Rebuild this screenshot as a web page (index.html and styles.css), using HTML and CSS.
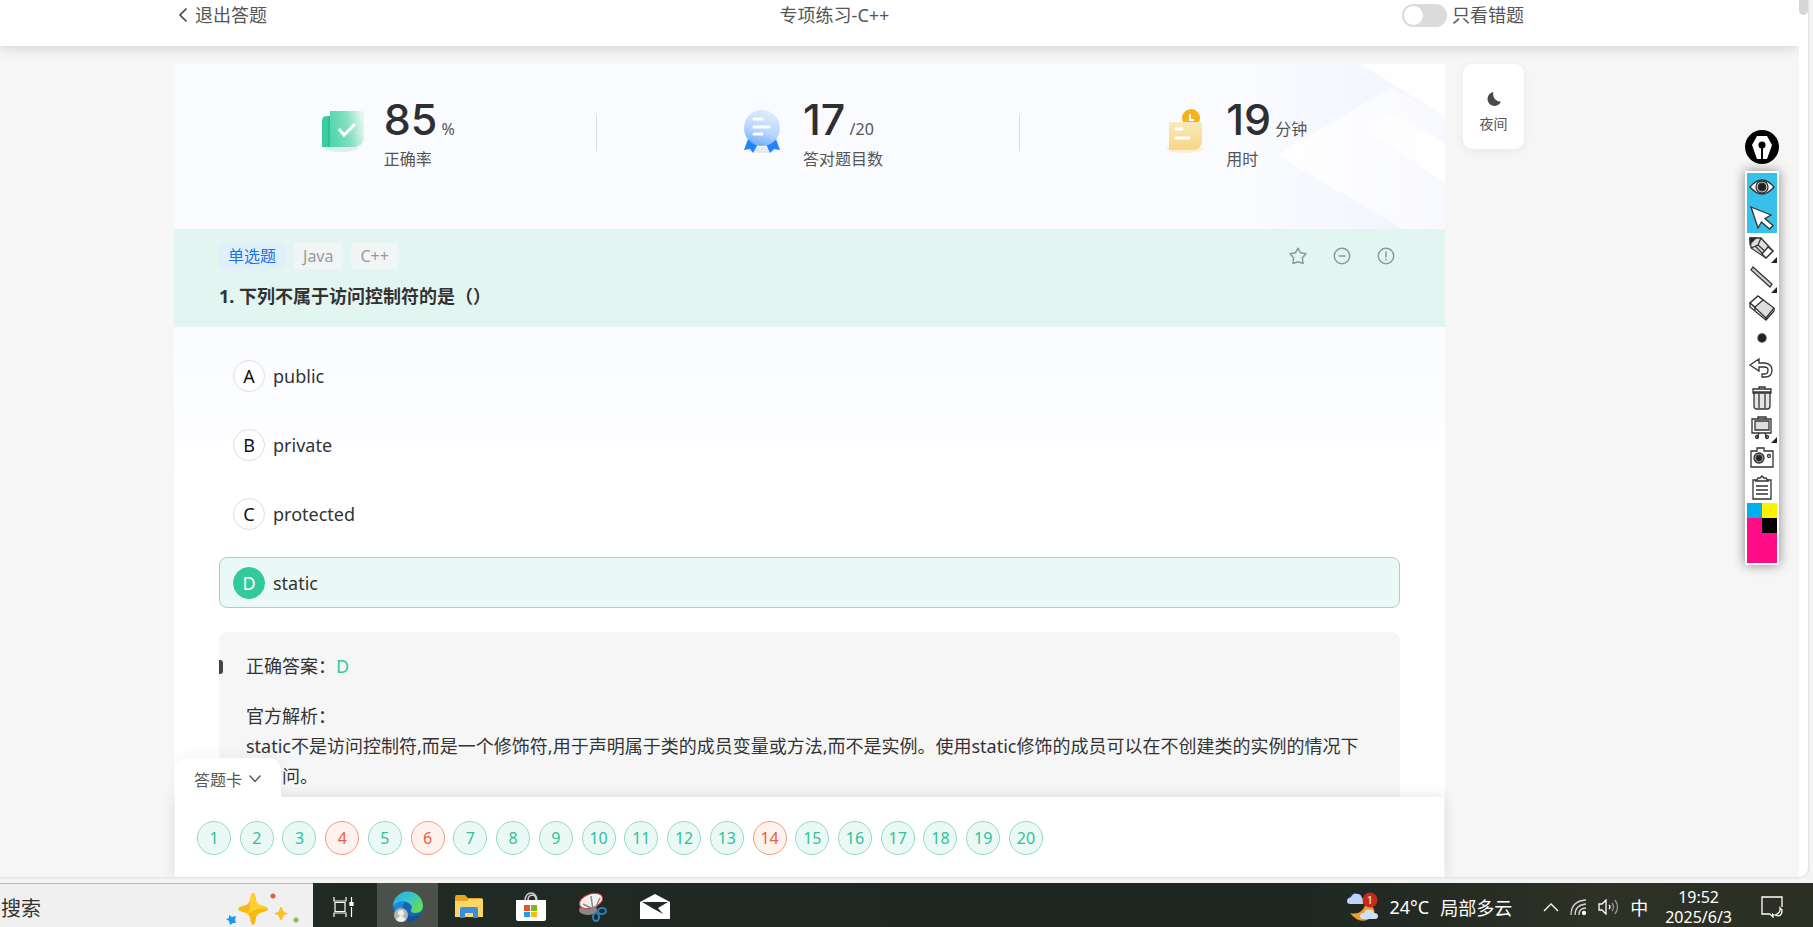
FILE: index.html
```
<!DOCTYPE html>
<html lang="zh-CN">

<head>
    <meta charset="UTF-8">
    <title>专项练习-C++</title>
    <link rel="stylesheet" href="styles.css">
</head>
<body>
    <div class="browser">
        <div class="page">
            <header class="top-bar">
                <a class="back" href="#">
                    <svg width="10" height="16" viewBox="0 0 10 16"><path d="M8.500 1.500L2 8l6.500 6.500" fill="none" stroke="#444" stroke-width="1.600"/></svg>
                    退出答题
                </a>
                <span class="top-title">专项练习-C++</span>
                <label class="only-wrong"><input type="checkbox" class="switch">只看错题</label>
            </header>

            <div class="content">
                <main class="card">
                    <section class="stats">
                        <svg class="stats-bg" width="200" height="165" viewBox="0 0 200 165">
                            <defs>
                                <linearGradient id="bgA" x1="0" x2="1" y1="0" y2="0">
                                    <stop offset="0" stop-color="#f1f4fd" stop-opacity="0"/>
                                    <stop offset="1" stop-color="#f1f4fd"/>
                                </linearGradient>
                                <linearGradient id="bgB" x1="0" x2="1" y1="0" y2="0">
                                    <stop offset="0" stop-color="#fff"/>
                                    <stop offset="1" stop-color="#f8f9fe"/>
                                </linearGradient>
                                <linearGradient id="bgC" x1="0" x2="1" y1="0" y2="0">
                                    <stop offset="0" stop-color="#fff" stop-opacity=".4"/>
                                    <stop offset="1" stop-color="#fff"/>
                                </linearGradient>
                            </defs>
                            <path d="M0 0h115l85 53v112H0z" fill="url(#bgA)"/>
                            <path d="M32 91L147 23l53 30v112h-42z" fill="url(#bgB)"/>
                            <path d="M115 0h85v53z" fill="#fefeff"/>
                            <path d="M117 63l30-14 53 30v40z" fill="url(#bgC)"/>
                        </svg>
                        <div class="stat">
                            <svg class="stat-icon" width="48" height="48" viewBox="0 0 48 48">
                                <defs>
                                    <linearGradient id="book" x1="0" x2="1" y1=".6" y2=".4">
                                        <stop offset="0" stop-color="#4ed6ab"/>
                                        <stop offset=".55" stop-color="#86dfc2"/>
                                        <stop offset="1" stop-color="#e3f8f1"/>
                                    </linearGradient>
                                </defs>
                                <ellipse cx="22" cy="40" rx="17" ry="4" fill="#d9f2ea"/>
                                <path d="M3 39V13q0-5 5-5h6v31z" fill="#3ccc9e"/>
                                <path d="M9 39V8h4v31z" fill="#2fbf92"/>
                                <path d="M11 3h31q3 0 3 3v22q0 11-11 11H11z" fill="url(#book)"/>
                                <path d="M20 21l5 6 11-11" fill="none" stroke="#fff" stroke-width="3"/>
                            </svg>
                            <div>
                                <div class="stat-value"><strong>85</strong> %</div>
                                <div class="stat-label">正确率</div>
                            </div>
                        </div>
                        <div class="stat">
                            <svg class="stat-icon" width="48" height="48" viewBox="0 0 48 48">
                                <defs>
                                    <linearGradient id="medal" x1=".7" x2=".4" y1="0" y2="1">
                                        <stop offset="0" stop-color="#e1eefd"/>
                                        <stop offset=".6" stop-color="#b9d6fd"/>
                                        <stop offset="1" stop-color="#6eadfc"/>
                                    </linearGradient>
                                </defs>
                                <ellipse cx="24" cy="42" rx="14" ry="3" fill="#e6e9f2"/>
                                <path d="M10 31l10 5-5 9-3-4-6 1z" fill="#2483fb"/>
                                <path d="M38 31l-10 5 4 9 4-4 6 1z" fill="#2483fb"/>
                                <circle cx="24" cy="20" r="18" fill="url(#medal)"/>
                                <path d="M16 11h8M16 19h15M16 26h8" stroke="#fff" stroke-width="3" stroke-linecap="round"/>
                            </svg>
                            <div>
                                <div class="stat-value"><strong>17</strong> /20</div>
                                <div class="stat-label">答对题目数</div>
                            </div>
                        </div>
                        <div class="stat">
                            <svg class="stat-icon" width="48" height="48" viewBox="0 0 48 48">
                                <defs>
                                    <linearGradient id="note" x1="0" x2="0" y1="0" y2="1">
                                        <stop offset="0" stop-color="#f9e9bf"/>
                                        <stop offset="1" stop-color="#f8d783"/>
                                    </linearGradient>
                                </defs>
                                <ellipse cx="24" cy="41" rx="19" ry="4" fill="#fbf1d6"/>
                                <circle cx="30" cy="10" r="9" fill="#f4b41c"/>
                                <path d="M8 14h31q2 0 2 2v16q0 10-9 10H8z" fill="url(#note)"/>
                                <path d="M29 6v6h4" fill="none" stroke="#fff" stroke-width="2"/>
                                <path d="M15 21h6M15 30h13" stroke="#fff" stroke-width="3" stroke-linecap="round"/>
                            </svg>
                            <div>
                                <div class="stat-value"><strong>19</strong> 分钟</div>
                                <div class="stat-label">用时</div>
                            </div>
                        </div>
                    </section>

                    <section class="question">
                        <div class="question-top">
                            <span class="tag tag-type">单选题</span>
                            <span class="tag">Java</span>
                            <span class="tag">C++</span>
                            <div class="actions">
                                <button aria-label="收藏"><svg width="18" height="18" viewBox="0 0 18 18"><path d="M9 1.200l2.500 4.600 5.500 1-3.600 4 .6 5.700-5-1.700-5 1.700.6-5.700L1 6.800l5.500-1z"/></svg></button>
                                <button aria-label="移除"><svg width="18" height="18" viewBox="0 0 18 18"><circle cx="9" cy="9" r="7.700"/><path d="M5.500 9h7"/></svg></button>
                                <button aria-label="纠错"><svg width="18" height="18" viewBox="0 0 18 18"><circle cx="9" cy="9" r="7.700"/><path d="M9 4.500v6M9 11.800v1.700"/></svg></button>
                            </div>
                        </div>
                        <h1>1. 下列不属于访问控制符的是（）</h1>
                    </section>

                    <section class="options">
                        <button class="option"><span class="letter">A</span>public</button>
                        <button class="option"><span class="letter">B</span>private</button>
                        <button class="option"><span class="letter">C</span>protected</button>
                        <button class="option option-right"><span class="letter">D</span>static</button>
                    </section>

                    <section class="analysis">
                        <p class="answer">正确答案：<span>D</span></p>
                        <p>官方解析：</p>
                        <p>static不是访问控制符,而是一个修饰符,用于声明属于类的成员变量或方法,而不是实例。使用static修饰的成员可以在不创建类的实例的情况下被访问。</p>
                    </section>
                </main>
                <button class="night">
                    <svg width="16" height="16" viewBox="0 0 16 16"><path d="M7.500 1A7 7 0 1 0 15 10.500 7.300 7.300 0 0 1 7.500 1z" fill="#4a4a4a"/></svg>
                    夜间
                </button>
            </div>

            <div class="sheet">
                <button class="sheet-tab">答题卡
                    <svg width="14" height="10" viewBox="0 0 14 10"><path d="M1.500 1.500L7 7.500l5.500-6" fill="none" stroke="#555" stroke-width="1.400"/></svg>
                </button>
                <div class="sheet-body">
                    <div class="numbers">
                        <button>1</button>
                        <button>2</button>
                        <button>3</button>
                        <button class="wrong">4</button>
                        <button>5</button>
                        <button class="wrong">6</button>
                        <button>7</button>
                        <button>8</button>
                        <button>9</button>
                        <button>10</button>
                        <button>11</button>
                        <button>12</button>
                        <button>13</button>
                        <button class="wrong">14</button>
                        <button>15</button>
                        <button>16</button>
                        <button>17</button>
                        <button>18</button>
                        <button>19</button>
                        <button>20</button>
                    </div>
                </div>
            </div>
        </div>
        <div class="scroll-track"><div class="scroll-thumb"></div></div>
    </div>

    <!-- floating pen toolbar -->
    <aside class="pen">
        <svg width="34" height="34" viewBox="0 0 34 34">
            <circle cx="17" cy="17" r="17"/>
            <path d="M12 6h10l5 9-5 14h-4V16h-2v13h-4L7 15z" fill="#fff"/>
            <circle cx="17" cy="15" r="3.500"/>
        </svg>
        <div class="pen-panel">
            <button class="on" aria-label="显示"><svg viewBox="0 0 30 30"><path d="M3 14q12-14 24 0-12 14-24 0z" fill="#fff"/><circle cx="15" cy="14" r="6" fill="#e9dede"/><circle cx="15" cy="14" r="3.800" fill="#222"/></svg></button>
            <button class="on" aria-label="选择"><svg viewBox="0 0 30 30"><path d="M4 4l20 8-6 3.500 8 7-3.500 3.500-8-7-3.500 6z" fill="#fff"/></svg></button>
            <button class="more" aria-label="铅笔"><svg viewBox="0 0 30 30"><path d="M3 5h11l12 13-7 7L4 15z" fill="#ddd"/><path d="M3 5h6l-6 6z" fill="#222"/><path d="M14 5l-3 7-7 3M11 12l11 10M8 13l10 10"/><path d="M21 14l5 4-7 7-4-4z" fill="#fff"/></svg></button>
            <button class="more" aria-label="直线"><svg viewBox="0 0 30 30"><path d="M6 4l19 17-2 3L4 7z" fill="#ccc"/></svg></button>
            <button aria-label="橡皮"><svg viewBox="0 0 30 30"><path d="M3 10l8-7 16 12-8 10z" fill="#ddd"/><path d="M3 10l8-7 5 4-8 7z" fill="#fff"/><path d="M3 10v4l16 13 8-9v-3M8 14v4M19 25v2"/></svg></button>
            <button aria-label="粗细"><svg viewBox="0 0 30 30"><circle cx="15" cy="15" r="4" fill="#222"/></svg></button>
            <button aria-label="撤销"><svg viewBox="0 0 30 30"><path d="M3 12l9-6v4h6q7 1 7 7 0 7-7 7h-3v-3h3q3 0 3-4 0-3-4-3h-5v4z" fill="#fff"/></svg></button>
            <button aria-label="清空"><svg viewBox="0 0 30 30"><path d="M7 9h16v14q0 3-3 3H10q-3 0-3-3z" fill="#e4e4e4"/><path d="M6 6h18v4H6zM12 6V4h6v2M12 11v14M18 11v14" fill="none"/></svg></button>
            <button class="more" aria-label="白板"><svg viewBox="0 0 30 30"><path d="M5 6h19v14H5z" fill="#fff"/><path d="M8 8h14v9H8z" fill="#ddd"/><path d="M11 6V4h8v2M12 20l-2 5M18 20l2 5"/><circle cx="10" cy="24" r="1.500"/><circle cx="20" cy="24" r="1.500"/></svg></button>
            <button aria-label="截图"><svg viewBox="0 0 30 30"><path d="M4 8h6V5h7v3h9v16H4z" fill="#fff"/><circle cx="12" cy="15" r="5" fill="#999"/><circle cx="12" cy="15" r="2.500" fill="#222"/><circle cx="22" cy="13" r="1.500"/></svg></button>
            <button aria-label="剪贴板"><svg viewBox="0 0 30 30"><path d="M6 7h18v19H6z" fill="#fff"/><path d="M9 8l2-3h2l2-2 2 2h2l2 3z" fill="#eee"/><path d="M9 13h12M9 17h12M9 21h12"/></svg></button>
            <div class="colors"><i class="cyan"></i><i class="yellow"></i><i></i><i class="black"></i></div>
        </div>
    </aside>

    <footer class="taskbar">
        <div class="search">
            <span>搜索</span>
            <svg width="80" height="40" viewBox="0 0 80 40">
                <path d="M30 5q2 0 3 7 1 4 4 5 8 2 8 4t-8 4q-3 1-4 5-1 7-3 7t-3-7q-1-4-4-5-8-2-8-4t8-4q3-1 4-5 1-7 3-7z" fill="#f8b914"/>
                <path d="M30 5q2 0 3 7 1 4 4 5 8 2 8 4-12-2-22 6 6-8 4-15 1-7 3-7z" fill="#fdd131"/>
                <path d="M58 19q1 0 2 4 1 1 5 2.500-4 1.500-5 3-1 4-2 4t-2-4q-1-1.500-5-3 4-1.500 5-2.500 1-4 2-4z" fill="#f9c224"/>
                <path d="M6 27l3 2 4-1-1 4 1 3-3 0-3 2-1-4-3-2 3-1z" fill="#1a9be8"/>
                <circle cx="50" cy="8" r="2.500" fill="#dd6236"/>
                <circle cx="73" cy="32" r="2.500" fill="#83c043"/>
            </svg>
        </div>
        <button class="app" aria-label="任务视图"><svg width="24" height="24" viewBox="0 0 24 24" fill="none" stroke="#fff" stroke-width="1.200"><path d="M2 2v4h12V2M2 22v-4h12v4M3 7.500h10v9H3zM19.500 2v5M19.500 12v10"/><path d="M18 7.500h3v3h-3z" fill="#fff"/></svg></button>
        <button class="app app-open" aria-label="Edge">
            <svg width="32" height="32" viewBox="0 0 32 32">
                <defs>
                    <linearGradient id="edge" x1="0" x2="1" y1="0" y2=".6"><stop offset="0" stop-color="#2ba9e2"/><stop offset=".5" stop-color="#35c3cf"/><stop offset="1" stop-color="#64dc55"/></linearGradient>
                </defs>
                <circle cx="16" cy="16" r="15" fill="#1464b8"/>
                <path d="M1 16a15 15 0 0 1 30-1q0 7-8 7-5 0-4-3 2-3-1-6-8-6-17 3z" fill="url(#edge)"/>
                <path d="M1 15q5-6 12-4-5 6-1 14-7 3-11-10z" fill="#1b8ade"/>
                <path d="M12 22q6 6 17 1-5 8-13 8z" fill="#164e93"/>
                <circle cx="9" cy="24" r="7" fill="#b7b4b2"/>
                <circle cx="9" cy="22" r="3" fill="#f0eeec"/><path d="M4 29q5-8 10 0-5 4-10 0z" fill="#eee"/>
            </svg>
        </button>
        <button class="app" aria-label="文件资源管理器"><svg width="28" height="26" viewBox="0 0 28 26"><path d="M0 3q0-2 2-2h8l3 3h13q2 0 2 2v17H0z" fill="#e4a51f"/><path d="M0 7h12l2-2h14v18H0z" fill="#fcd567"/><path d="M5 24v-9q0-2 2-2h14q2 0 2 2v9h-5v-5h-8v5z" fill="#3a8fd8"/></svg></button>
        <button class="app" aria-label="应用商店"><svg width="30" height="30" viewBox="0 0 30 30"><path d="M9 8Q10 1 15 1t6 7M12 8q0-5 5-5 3 1 3 5" fill="none" stroke="#ccc" stroke-width="1.500"/><path d="M0 8h30v19q0 2-2 2H2q-2 0-2-2z" fill="#fff"/><path d="M8 13h6v6H8z" fill="#ef5428"/><path d="M15 13h6v6h-6z" fill="#7dba16"/><path d="M8 20h6v5H8z" fill="#18a1ea"/><path d="M15 20h6v5h-6z" fill="#fbb816"/></svg></button>
        <button class="app" aria-label="截图工具"><svg width="30" height="30" viewBox="0 0 30 30"><ellipse cx="10" cy="18" rx="9" ry="5" fill="#8d8785"/><ellipse cx="13" cy="9" rx="12" ry="7" transform="rotate(-20 13 9)" fill="#f2efef" stroke="#cf3b3b"/><path d="M13 4l2 14M5 12l14 7M22 6l-6 13" stroke="#888" stroke-width="1.500"/><ellipse cx="24" cy="19" rx="4" ry="3" fill="none" stroke="#2b83bd" stroke-width="2"/><ellipse cx="18" cy="25" rx="3" ry="4" fill="none" stroke="#2b83bd" stroke-width="2"/></svg></button>
        <button class="app" aria-label="邮件"><svg width="30" height="26" viewBox="0 0 30 26"><path d="M0 8l15-8 15 8v17H0z" fill="#fff"/><path d="M2 8h26l-10 6 5 6-9-5z" fill="#222a24"/></svg></button>

        <div class="tray">
            <svg width="32" height="30" viewBox="0 0 32 30">
                <path d="M3 21q12 3 16-10 12 5 7 13-12 11-23-3z" fill="#f29c2b"/>
                <path d="M3 12q-3 0-3-3t4-4q2-5 7-3 3 0 4 4 3 1 2 4 0 2-3 2z" fill="#bcd4f8"/>
                <path d="M16 27q-3 0-3-3t4-3q2-5 7-3 3 1 3 3 4 0 4 3t-3 3z" fill="#d0e0fb"/>
                <circle cx="23" cy="8" r="7.500" fill="#c42b1c"/>
                <text x="23" y="12" text-anchor="middle" class="badge">1</text>
            </svg>
            <span class="weather">24°C</span>
            <span class="weather sky">局部多云</span>
            <svg width="16" height="10" viewBox="0 0 16 10"><path d="M1 9l7-7 7 7"/></svg>
            <svg width="17" height="18" viewBox="0 0 17 18"><path d="M1 17Q1 3 16 2M5 17Q5 7 16 6M9 17q0-7 7-7" opacity=".8"/><circle cx="14" cy="15" r="1.500" fill="#fff"/></svg>
            <svg width="21" height="16" viewBox="0 0 21 16"><path d="M1 5h3l4-4v14l-4-4H1zM11 6q2 2 0 4"/><path d="M14 4q3 4 0 8M17 1q5 7 0 14" opacity=".5"/></svg>
            <span class="ime">中</span>
            <div class="clock"><div>19:52</div><div>2025/6/3</div></div>
            <svg width="22" height="22" viewBox="0 0 22 22"><path d="M12 18h-1M9 18H1V1h20v10"/><path d="M9 18l3 3v-3M19 12q1 5-5 7 7 3 7-5z"/></svg>
        </div>
    </footer>
</body>
</html>
```
FILE: styles.css
```
* {
    box-sizing: border-box;
}

body {
    margin: 0;
    height: 100vh;
    display: flex;
    flex-direction: column;
    overflow: hidden;
    background: #f4f4f4;
    color: #333;
    font-family: 'Noto Sans', 'Noto Sans CJK SC', sans-serif;
    font-size: 18px;
}

button {
    font: inherit;
    color: inherit;
    background: none;
    border: none;
    padding: 0;
    cursor: pointer;
}

h1,
p {
    margin: 0;
}

.browser {
    flex: 1;
    min-height: 0;
    display: flex;
    margin: 0 5px 6px 0;
    background: #fff;
    border-bottom-right-radius: 9px;
    box-shadow: 0 0 2px 1px #ddd;
    overflow: hidden;
}

.page {
    position: relative;
    flex: 1;
    height: 100%;
    overflow: hidden;
    display: flex;
    flex-direction: column;
    background: #f6f6f6;
}

.scroll-track {
    width: 9px;
}

.scroll-thumb {
    height: 15px;
    background: #d6d6d6;
    border-radius: 0 0 5px 5px;
}

/* header */
.top-bar {
    flex: none;
    display: flex;
    justify-content: space-between;
    height: 46px;
    padding: 0 275px 0 178px;
    background: #fff;
    box-shadow: 0 2px 12px rgba(0, 0, 0, .15);
    line-height: 30px;
    color: #555;
}

.back {
    display: flex;
    align-items: center;
    gap: 7px;
    height: 30px;
    color: #555;
    text-decoration: none;
}

.only-wrong {
    display: flex;
    align-items: center;
    gap: 5px;
    height: 30px;
}

.switch {
    appearance: none;
    width: 45px;
    height: 23px;
    margin: 0;
    padding: 2px;
    border-radius: 12px;
    background: #dbdbdb;
}

.switch::before {
    content: '';
    display: block;
    width: 19px;
    height: 19px;
    border-radius: 50%;
    background: #fff;
}

/* main column */
.content {
    flex: 1;
    min-height: 0;
    display: flex;
    align-items: flex-start;
    gap: 18px;
    padding: 18px 275px 0 174px;
}

.card {
    flex: 1;
    height: 860px;
    background: linear-gradient(#f9fbff 260px, #fff 420px);
}

.stats {
    position: relative;
    display: flex;
    height: 165px;
    padding-top: 31px;
}

.stats-bg {
    position: absolute;
    top: 0;
    right: 0;
}

.stat {
    position: relative;
    flex: 1;
    display: flex;
    justify-content: center;
    align-items: flex-start;
    gap: 17px;
    height: 75px;
    padding-left: 2px;
}

.stat + .stat::before {
    content: '';
    align-self: center;
    position: absolute;
    left: -2px;
    width: 1px;
    height: 36px;
    background: #dcdee4;
}

.stat-icon {
    margin-top: 13px;
}

.stat-value {
    height: 52px;
    line-height: 48px;
    font-size: 16px;
    color: #555;
}

.stat-value strong {
    font-family: Inter, sans-serif;
    font-size: 43px;
    font-weight: 500;
    color: #2d2f33;
}

.stat-label {
    line-height: 24px;
    font-size: 16px;
    color: #555;
}

.question {
    height: 98px;
    padding: 14px 50px 0 45px;
    background: #e3f5f1;
}

.question-top {
    display: flex;
    gap: 9px;
    height: 26px;
}

.tag {
    padding: 0 9px;
    border-radius: 4px;
    background: #f1f5f6;
    color: #999;
    font-size: 16px;
    line-height: 26px;
}

.tag-type {
    background: #e0f0fb;
    color: #1a73e8;
}

.actions {
    display: flex;
    align-items: center;
    gap: 26px;
    margin-left: auto;
}

.actions button {
    height: 18px;
}

.actions svg {
    display: block;
    fill: none;
    stroke: #8b9a97;
    stroke-width: 1.5;
    stroke-linejoin: round;
}

h1 {
    margin-top: 13px;
    font-size: 18px;
    line-height: 28px;
    font-weight: bold;
}

.options {
    display: flex;
    flex-direction: column;
    gap: 18px;
    padding: 23px 45px 0;
}

.option {
    display: flex;
    align-items: center;
    gap: 8px;
    height: 51px;
    padding: 0 13px;
    border: 1px solid transparent;
    border-radius: 8px;
}

.letter {
    width: 32px;
    height: 32px;
    line-height: 30px;
    border: 1px solid #dfdfe3;
    border-radius: 50%;
    background: #fff;
    color: #111;
    text-align: center;
}

.option-right {
    background: #ebf9f6;
    border-color: #93dcc4;
}

.option-right .letter {
    background: #32ca99;
    border-color: #32ca99;
    color: #fff;
}

.analysis {
    height: 300px;
    margin: 24px 45px 0;
    padding: 19px 27px;
    border-radius: 9px;
    background: #f6f6f6;
    line-height: 30px;
}

.answer {
    position: relative;
    margin-bottom: 20px;
}

.answer::before {
    content: '';
    position: absolute;
    left: -27px;
    top: 9px;
    width: 4px;
    height: 14px;
    border-radius: 0 3px 3px 0;
    background: #444;
}

.answer span {
    color: #32ca99;
}

.night {
    width: 61px;
    height: 85px;
    border-radius: 9px;
    background: #fff;
    box-shadow: 0 2px 10px rgba(0, 0, 0, .06);
    color: #555;
    font-size: 14px;
    line-height: 24px;
    display: flex;
    flex-direction: column;
    align-items: center;
    justify-content: center;
    gap: 5px;
    padding-top: 13px;
}

/* answer sheet lies over the bottom of the page */
.sheet {
    position: absolute;
    left: 175px;
    right: 355px;
    bottom: 0;
}

.sheet-tab {
    position: relative;
    z-index: 1;
    display: flex;
    align-items: center;
    justify-content: center;
    gap: 6px;
    width: 106px;
    height: 42px;
    border-radius: 12px 12px 0 0;
    background: #fff;
    color: #555;
    font-size: 16px;
    box-shadow: 0 -4px 12px rgba(0, 0, 0, .04);
}

.sheet-body {
    margin-top: -3px;
    padding: 24px 22px 22px;
    background: #fff;
    box-shadow: 0 0 14px rgba(0, 0, 0, .12);
}

.numbers {
    display: flex;
    justify-content: space-between;
    max-width: 846px;
}

.numbers button {
    width: 34px;
    height: 34px;
    border: 1px solid #93dcc4;
    border-radius: 50%;
    background: #ebf9f6;
    color: #32c195;
    font-size: 16px;
}

.numbers .wrong {
    border-color: #f29c83;
    background: #fef2ee;
    color: #e8623c;
}

/* pen toolbar */
.pen {
    position: fixed;
    top: 130px;
    right: 34px;
    width: 34px;
}

.pen > svg {
    display: block;
}

.pen-panel {
    margin-top: 7px;
    padding: 2px;
    background: #fff;
    box-shadow: 0 0 12px rgba(0, 0, 0, .45);
}

.pen-panel button {
    position: relative;
    display: block;
    width: 30px;
    height: 30px;
}

.pen-panel button svg {
    display: block;
    fill: none;
    stroke: #333;
    stroke-width: 1.3;
}

.pen-panel .on {
    background: #36c0ea;
}

.more::after {
    content: '';
    position: absolute;
    right: 0;
    bottom: 0;
    border: 3px solid #222;
    border-top-color: transparent;
    border-left-color: transparent;
}

.colors {
    display: grid;
    grid-template-columns: 15px 15px;
    grid-auto-rows: 15px;
    height: 60px;
    background: #ff0d87;
}

.cyan {
    background: #00aeef;
}

.yellow {
    background: #fff200;
}

.black {
    background: #000;
}

/* taskbar */
.taskbar {
    flex: none;
    display: flex;
    height: 44px;
    background: linear-gradient(90deg, #222d25, #1f2722 50%, #1e2722 72%, #2e3125 88%, #2b2f24);
    color: #fff;
}

.search {
    display: flex;
    justify-content: space-between;
    align-items: center;
    width: 313px;
    padding: 4px 10px 0 1px;
    border-top: 1px solid #bbb;
    background: #f0f0f0;
    color: #333;
    font-size: 20px;
}

.app {
    display: flex;
    align-items: center;
    justify-content: center;
    width: 62px;
    padding-top: 4px;
}

.app-open {
    width: 61px;
    margin-left: 2px;
    background: #4b504b;
}

.tray {
    display: flex;
    align-items: center;
    margin-left: auto;
    padding: 4px 30px 0 0;
    gap: 11px;
}

.tray svg {
    fill: none;
    stroke: #fff;
    stroke-width: 1.3;
}

.tray svg:first-child {
    stroke: none;
}

.tray .badge {
    fill: #fff;
    font-size: 11px;
}

.weather {
    font-size: 18px;
}

.sky {
    margin-right: 20px;
}

.ime {
    font-size: 18px;
}

.clock {
    align-self: flex-start;
    margin: 0 18px 0 6px;
    font-size: 16px;
    line-height: 20px;
    text-align: center;
}
```
